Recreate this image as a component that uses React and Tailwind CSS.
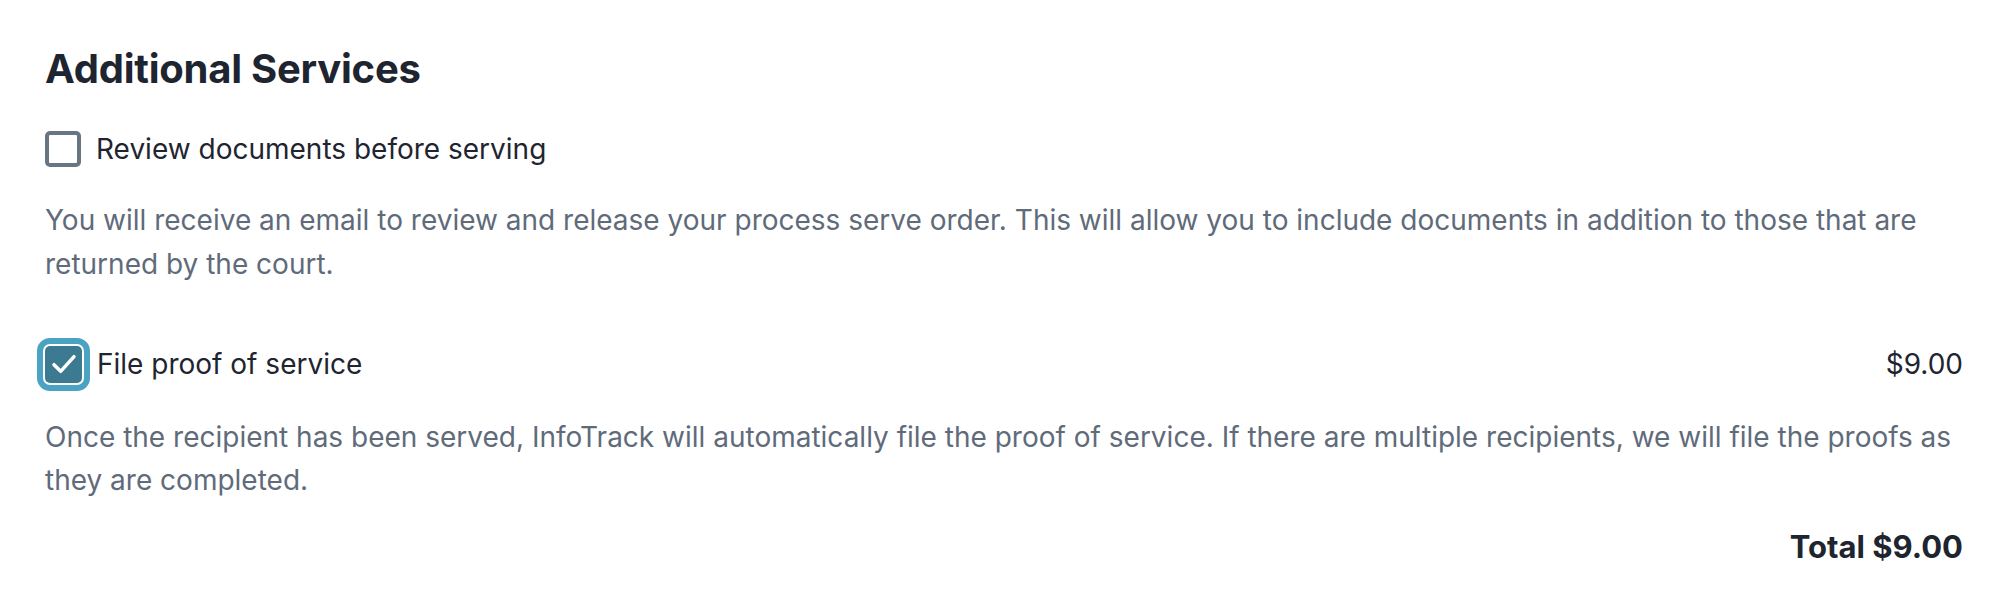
import React from 'react';

function CheckBox({ checked }) {
  if (checked) {
    return (
      <span className="w-[37px] h-[37px] shrink-0 rounded-[5px] bg-[#3b7a91] flex items-center justify-center outline-[6px] outline-solid outline-[#4ba3c3] outline-offset-2">
        <svg width="32" height="32" viewBox="0 0 24 24" fill="none" stroke="#ffffff" strokeWidth="2.6" strokeLinecap="round" strokeLinejoin="round">
          <polyline points="4.5 12.5 9.5 17.5 19.5 6.5" />
        </svg>
      </span>
    );
  }
  return <span className="w-[36px] h-[36px] shrink-0 rounded-[5px] border-4 border-[#6a7583] bg-white" />;
}

export default function App() {
  return (
    <div className="bg-white w-full min-h-[610px] pl-[45px] pr-[53px] pt-[45px] font-['Inter','Noto_Sans',sans-serif]">
      <h2 className="text-[40px] leading-[48px] font-bold text-[#1e2530] tracking-[-0.006em]">Additional Services</h2>

      {/* Review documents */}
      <label className="mt-[34px] flex items-center h-[44px] gap-[15px] text-[28px] text-[#1f2530]">
        <CheckBox checked={false} />
        <span>Review documents before serving</span>
      </label>
      <p className="mt-[27px] text-[28px] leading-[44px] text-[#5f6b7a]">
        You will receive an email to review and release your process serve order. This will allow you to include documents in addition to those that are returned by the court.
      </p>

      {/* File proof of service */}
      <div className="mt-[56px] flex items-center justify-between h-[44px] text-[28px] text-[#1f2530]">
        <label className="flex items-center gap-[15px]">
          <CheckBox checked />
          <span>File proof of service</span>
        </label>
        <span>$9.00</span>
      </div>
      <p className="mt-[30px] text-[28px] leading-[43px] text-[#5f6b7a]">
        Once the recipient has been served, InfoTrack will automatically file the proof of service. If there are multiple recipients, we will file the proofs as they are completed.
      </p>

      <div className="mt-[25px] flex justify-end text-[31px] leading-[40px] font-bold text-[#1e2530]">Total $9.00</div>
    </div>
  );
}
